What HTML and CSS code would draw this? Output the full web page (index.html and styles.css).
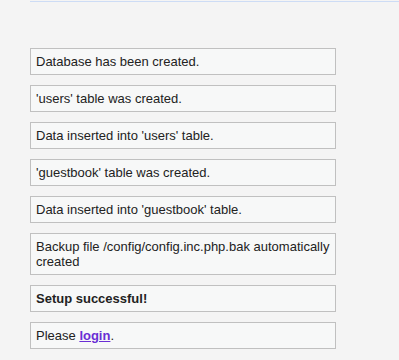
FILE: index.html
```html
<!DOCTYPE html>
<html lang="en">
<head>
    <meta charset="UTF-8">
    <title>Setup</title>
    <link rel="stylesheet" href="styles.css">
</head>
<body>
    <div class="main">
        <div class="message">Database has been created.</div>
        <div class="message">'users' table was created.</div>
        <div class="message">Data inserted into 'users' table.</div>
        <div class="message">'guestbook' table was created.</div>
        <div class="message">Data inserted into 'guestbook' table.</div>
        <div class="message">Backup file /config/config.inc.php.bak automatically created</div>
        <div class="message"><strong>Setup successful!</strong></div>
        <div class="message">Please <a href="#">login</a>.</div>
    </div>
</body>
</html>
```

FILE: styles.css
```css
body {
    margin: 0;
    padding-top: 1px;
    background: #f4f4f4;
    color: #222;
    font-family: "Liberation Sans", Arial, sans-serif;
    font-size: 13px;
    line-height: 15px;
}

.main {
    margin-left: 30px;
    border-top: 1px solid #cddcf5;
    padding-top: 46px;
    display: flex;
    flex-direction: column;
    gap: 10px;
}

.message {
    width: 294px;
    padding: 5px;
    background: #f7f8f8;
    border: 1px solid #c0c0c0;
}

.message a {
    color: #6a2ed4;
    font-weight: bold;
}
```
